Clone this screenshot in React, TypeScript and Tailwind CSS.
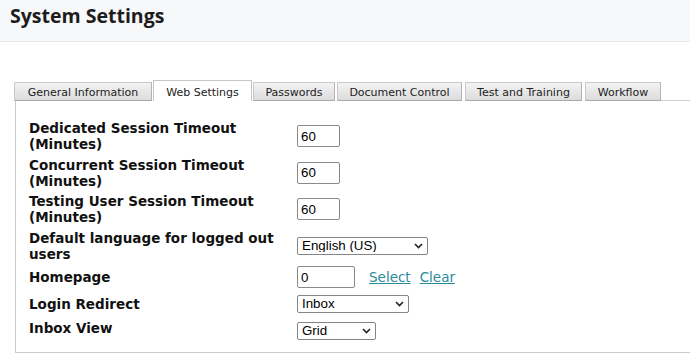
import { ReactNode } from "react"

const tabs = [
  { label: "General Information", cls: "w-[138px]" },
  { label: "Web Settings", cls: "ml-[1px] w-[99px]", active: true },
  { label: "Passwords", cls: "ml-[1px] w-[82px]" },
  { label: "Document Control", cls: "ml-[2px] w-[125px]" },
  { label: "Test and Training", cls: "ml-[3px] w-[117px]" },
  { label: "Workflow", cls: "ml-[3px] w-[76px]" },
]

function Chevron() {
  return (
    <svg width="9" height="6" viewBox="0 0 9 6" className="pointer-events-none absolute right-[5px] top-1/2 -translate-y-1/2">
      <path d="M1 1l3.5 3.5L8 1" fill="none" stroke="#222" strokeWidth="1.6" />
    </svg>
  )
}

function Select({ value, options, width }: { value: string; options: string[]; width: string }) {
  return (
    <div className={`relative h-[18px] ${width}`}>
      <select
        defaultValue={value}
        className="block h-full w-full appearance-none rounded-[2px] border border-[#858585] bg-white pl-[4px] pr-[18px] font-['Liberation_Sans',Arial,sans-serif] text-[13.33px] leading-none text-black outline-none"
      >
        {options.map((o) => (
          <option key={o}>{o}</option>
        ))}
      </select>
      <Chevron />
    </div>
  )
}

function TextInput({ value, width }: { value: string; width: string }) {
  return (
    <input
      defaultValue={value}
      className={`block h-[22px] ${width} rounded-[2px] border border-[#8a8a8a] bg-white px-[3px] font-['Liberation_Sans',Arial,sans-serif] text-[13.33px] text-black outline-none`}
    />
  )
}

function Row({ label, children, cls = "items-center" }: { label: string; children: ReactNode; cls?: string }) {
  return (
    <div className={`flex ${cls}`}>
      <div className="w-[268px] shrink-0 pr-[10px] font-['DejaVu_Sans',Verdana,sans-serif] text-[13.5px] font-bold leading-[16px] text-[#111]">
        {label}
      </div>
      <div className="flex items-center">{children}</div>
    </div>
  )
}

export default function App() {
  return (
    <div className="h-[361px] w-[690px] overflow-hidden bg-white">
      {/* page title */}
      <div className="h-[42px] border-b border-[#e5e7ea] bg-[#f7f8fa] pl-[10px] pt-[6px]">
        <h1 className="font-['Open_Sans',sans-serif] text-[19.5px] font-bold leading-[20px] text-[#1d1d1d]">System Settings</h1>
      </div>

      {/* tabs */}
      <div className="mt-[38px] flex items-end pl-[14px] font-['DejaVu_Sans',Verdana,sans-serif] text-[11px] leading-[13px] text-[#222]">
        {tabs.map((t) =>
          t.active ? (
            <div key={t.label} className={`flex h-[21px] shrink-0 items-end justify-center border border-b-0 border-[#c6c6c6] bg-white pb-[2px] ${t.cls}`}>
              {t.label}
            </div>
          ) : (
            <div
              key={t.label}
              className={`flex h-[19px] shrink-0 items-end justify-center border border-[#c9c9c9] border-r-[#b3b3b3] border-b-[#a9a9a9] bg-linear-to-b from-[#f3f3f3] to-[#dcdcdc] pb-[1px] ${t.cls}`}
            >
              {t.label}
            </div>
          )
        )}
        <div className="h-px flex-1 bg-[#cfcfcf]" />
      </div>

      {/* tab panel */}
      <div className="ml-[15px] flex flex-col gap-y-[4.5px] border-b border-l border-[#cccccc] pb-[12px] pl-[13px] pt-[19px]">
        <Row label="Dedicated Session Timeout (Minutes)">
          <TextInput value="60" width="w-[43px]" />
        </Row>
        <Row label="Concurrent Session Timeout (Minutes)">
          <TextInput value="60" width="w-[43px]" />
        </Row>
        <Row label="Testing User Session Timeout (Minutes)">
          <TextInput value="60" width="w-[43px]" />
        </Row>
        <Row label="Default language for logged out users">
          <Select value="English (US)" options={["English (US)", "English (UK)", "Français", "Deutsch", "Español"]} width="w-[131px]" />
        </Row>
        <Row label="Homepage">
          <TextInput value="0" width="w-[58px]" />
          <a href="#" className="ml-[14px] font-['DejaVu_Sans',Verdana,sans-serif] text-[13.5px] text-[#2a8b9c] underline">
            Select
          </a>
          <a href="#" className="ml-[9px] font-['DejaVu_Sans',Verdana,sans-serif] text-[13.5px] text-[#2a8b9c] underline">
            Clear
          </a>
        </Row>
        <Row label="Login Redirect" cls="h-[23px] items-center">
          <Select value="Inbox" options={["Inbox", "Dashboard", "Documents"]} width="w-[112px]" />
        </Row>
        <Row label="Inbox View" cls="items-start">
          <div className="mt-[2px]">
            <Select value="Grid" options={["Grid", "List"]} width="w-[79px]" />
          </div>
        </Row>
      </div>
    </div>
  )
}
